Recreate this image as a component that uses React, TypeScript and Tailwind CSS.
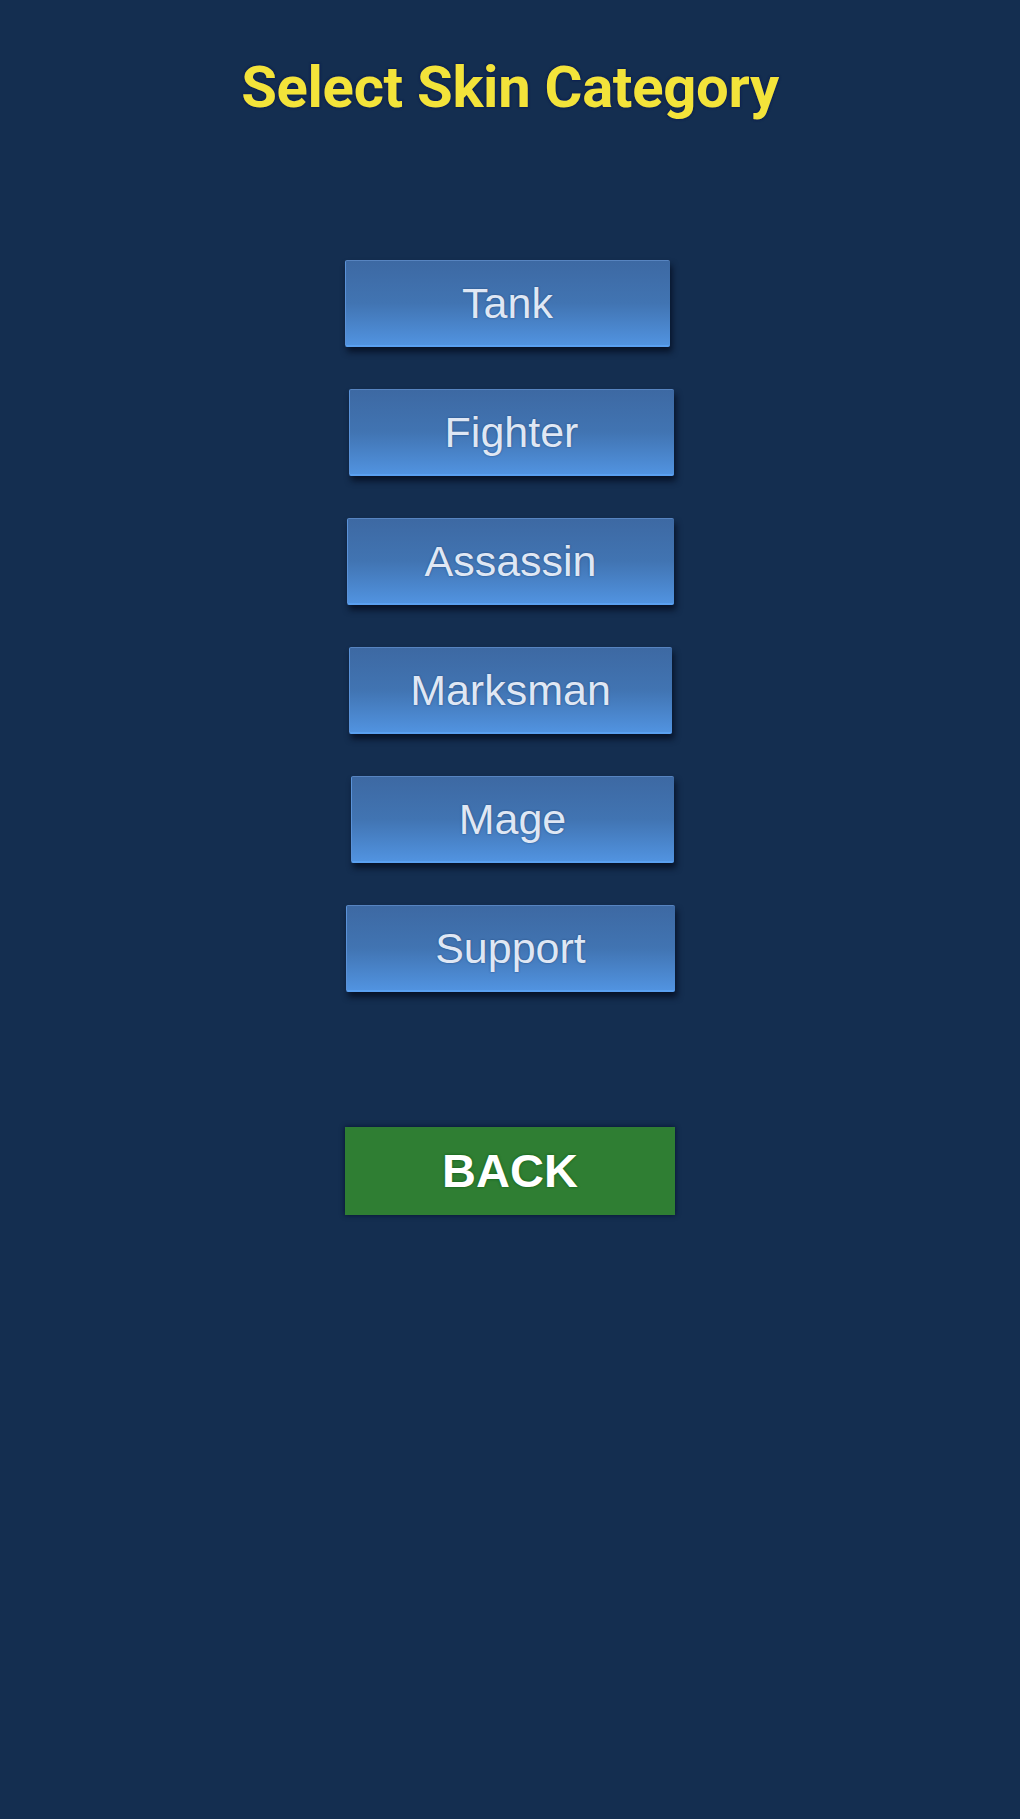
import React from "react";

const cats: { label: string; cls: string }[] = [
  { label: "Tank", cls: "w-[325px] -translate-x-[3px]" },
  { label: "Fighter", cls: "w-[325px] translate-x-[1px]" },
  { label: "Assassin", cls: "w-[327px]" },
  { label: "Marksman", cls: "w-[323px]" },
  { label: "Mage", cls: "w-[323px] translate-x-[2px]" },
  { label: "Support", cls: "w-[329px]" },
];

export default function App() {
  return (
    <div className="min-h-screen w-full bg-[#142e50] flex flex-col items-center">
      <h1
        className="mt-[52px] text-[58px] leading-[70px] font-bold tracking-[-0.3px] text-[#f3e33a] [font-family:Roboto,'Liberation_Sans',sans-serif] [text-shadow:0_0_3px_#0a1a55,0_0_2px_#0a1a55]"
      >
        Select Skin Category
      </h1>
      <div className="mt-[138px] flex flex-col items-center gap-[42px]">
        {cats.map((c) => (
          <button
            key={c.label}
            className={`${c.cls} h-[87px] flex items-center justify-center rounded-[2px] bg-gradient-to-b from-[#3d69a3] via-[#4174b2] to-[#5193e0] border-t border-t-[#5784c0] border-b-2 border-b-[#5aa0f0] border-l border-l-[#5a92d8] shadow-[2px_5px_6px_rgba(6,16,36,0.9)] text-[43px] text-[#dfe7f4] [font-family:'Liberation_Sans',Arial,sans-serif] [text-shadow:0_0_2px_rgba(20,50,100,0.7)]`}
          >
            {c.label}
          </button>
        ))}
      </div>
      <button className="mt-[135px] w-[330px] h-[88px] flex items-center justify-center bg-[#2f7e33] shadow-[0_0_5px_rgba(5,15,45,0.95)] text-[47px] font-bold text-white [font-family:'Liberation_Sans',Arial,sans-serif] [text-shadow:0_0_3px_#0b5a10]">
        BACK
      </button>
    </div>
  );
}
